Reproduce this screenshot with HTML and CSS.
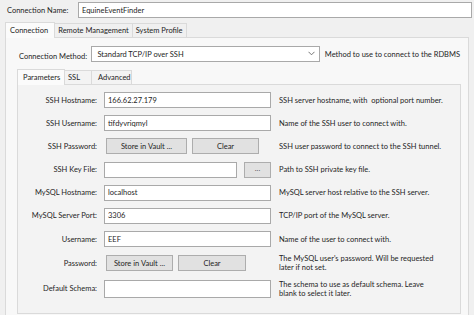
FILE: index.html
```html
<!DOCTYPE html>
<html>
<head>
<meta charset="utf-8">
<link rel="stylesheet" href="styles.css">
</head>
<body>
<div class="window">
  <div class="name-row">
    <span class="name-label">Connection Name:</span>
    <div class="field name-field">EquineEventFinder</div>
  </div>

  <div class="tabs">
    <div class="tab active">Connection</div>
    <div class="tab">Remote Management</div>
    <div class="tab">System Profile</div>
  </div>
  <div class="panel">
    <div class="method-row">
      <span class="method-label">Connection Method:</span>
      <div class="select">
        <span>Standard TCP/IP over SSH</span>
        <svg class="chev" width="7" height="5" viewBox="0 0 7 5"><path d="M0.5 0.8 L3.5 3.8 L6.5 0.8" fill="none" stroke="#666" stroke-width="0.9"/></svg>
      </div>
      <span class="desc">Method to use to connect to the RDBMS</span>
    </div>

    <div class="subtabs">
      <div class="subtab active">Parameters</div>
      <div class="subtab">SSL</div>
      <div class="subtab">Advanced</div>
    </div>
    <div class="subpanel">
      <div class="form">
        <span class="lbl">SSH Hostname:</span>
        <div class="field">166.62.27.179</div>
        <span class="desc">SSH server hostname, with &nbsp;optional port number.</span>

        <span class="lbl">SSH Username:</span>
        <div class="field">tifdyvriqmyl</div>
        <span class="desc">Name of the SSH user to connect with.</span>

        <span class="lbl">SSH Password:</span>
        <div class="btns wide">
          <div class="btn">Store in Vault ...</div>
          <div class="btn">Clear</div>
        </div>
        <span class="desc">SSH user password to connect to the SSH tunnel.</span>

        <span class="lbl">SSH Key File:</span>
        <div class="keyfile">
          <div class="field"></div>
          <div class="btn dots">...</div>
        </div>
        <span class="desc">Path to SSH private key file.</span>

        <span class="lbl">MySQL Hostname:</span>
        <div class="field">localhost</div>
        <span class="desc">MySQL server host relative to the SSH server.</span>

        <span class="lbl">MySQL Server Port:</span>
        <div class="field">3306</div>
        <span class="desc">TCP/IP port of the MySQL server.</span>

        <span class="lbl">Username:</span>
        <div class="field">EEF</div>
        <span class="desc">Name of the user to connect with.</span>

        <span class="lbl">Password:</span>
        <div class="btns narrow">
          <div class="btn">Store in Vault ...</div>
          <div class="btn">Clear</div>
        </div>
        <span class="desc two">The MySQL user's password. Will be requested<br>later if not set.</span>

        <span class="lbl">Default Schema:</span>
        <div class="field tall"></div>
        <span class="desc two">The schema to use as default schema. Leave<br>blank to select it later.</span>
      </div>
    </div>
  </div>
</div>
</body>
</html>
```

FILE: styles.css
```css
html, body {
  margin: 0;
  padding: 0;
  background: #f0f0f0;
}
body {
  font-family: "Lato", "Open Sans", sans-serif;
  font-size: 7.5px;
  color: #1e1e1e;
  width: 474px;
  height: 315px;
  overflow: hidden;
}
.window {
  padding: 2px 2px 0 5px;
}
.name-row {
  display: flex;
  align-items: center;
  height: 16px;
}
.name-label {
  width: 71px;
  padding-left: 2px;
  white-space: nowrap;
}
.field {
  box-sizing: border-box;
  height: 16px;
  background: #fff;
  border: 1px solid #a9a9a9;
  padding: 0 3px;
  display: flex;
  align-items: center;
  white-space: nowrap;
}
.name-field {
  flex: 1;
}
.tabs {
  display: flex;
  margin-top: 4px;
  height: 15px;
  align-items: flex-end;
}
.tab {
  height: 14px;
  box-sizing: border-box;
  padding: 0 3px 0 3px;
  display: flex;
  align-items: center;
  border: 1px solid #dadada;
  border-bottom: none;
  margin-left: -1px;
  background: #f0f0f0;
  white-space: nowrap;
}
.tab:first-child { margin-left: 0; }
.tab.active {
  height: 16px;
  background: #fbfbfb;
  padding: 0 6px 0 4px;
  position: relative;
  z-index: 1;
  margin-bottom: -1px;
}
.panel {
  box-sizing: border-box;
  height: 280px;
  margin-right: 3px;
  border: 1px solid #dadada;
  background: #f8f8f8;
  padding: 8px 8px 0 11px;
}
.method-row {
  display: flex;
  align-items: center;
  height: 16px;
}
.method-label {
  width: 73px;
  padding-left: 2px;
  padding-top: 4px;
  white-space: nowrap;
}
.select {
  box-sizing: border-box;
  width: 230px;
  height: 16px;
  background: #fff;
  border: 1px solid #a9a9a9;
  display: flex;
  align-items: center;
  justify-content: space-between;
  padding: 0 4px 0 5px;
  margin-right: 4px;
  white-space: nowrap;
}
.chev { margin-top: -1px; }
.subtabs {
  display: flex;
  margin-top: 7px;
  height: 15px;
  align-items: flex-end;
}
.subtab {
  height: 14px;
  box-sizing: border-box;
  padding: 0 5px 0 4px;
  display: flex;
  align-items: center;
  border: 1px solid #dadada;
  border-bottom: none;
  margin-left: -1px;
  background: #f3f3f3;
  white-space: nowrap;
}
.subtab:first-child { margin-left: 0; }
.subtab:nth-child(2) { width: 28px; padding-left: 3px; }
.subtab:nth-child(3) { width: 41px; padding-left: 6px; }
.subtab.active {
  height: 16px;
  background: #fbfbfb;
  width: 48px;
  padding-left: 5px;
  position: relative;
  z-index: 1;
  margin-bottom: -1px;
}
.subpanel {
  box-sizing: border-box;
  height: 230px;
  width: 444px;
  border: 1px solid #dadada;
  background: #f3f3f3;
  padding: 7px 0 0 0;
}
.form {
  display: grid;
  grid-template-columns: 79px 167px 1fr;
  column-gap: 7px;
  row-gap: 7.2px;
  align-items: center;
}
.lbl {
  text-align: right;
  white-space: nowrap;
}
.desc {
  white-space: nowrap;
  padding-left: 1px;
}
.desc.two {
  line-height: 9px;
}
.btns {
  display: flex;
  gap: 5px;
  padding-left: 2px;
}
.btn {
  box-sizing: border-box;
  height: 16px;
  background: #e1e1e1;
  border: 1px solid #adadad;
  display: flex;
  align-items: center;
  justify-content: center;
  white-space: nowrap;
}
.btns.wide .btn:first-child { width: 81px; }
.btns.wide .btn:last-child { width: 67px; }
.btns.narrow .btn:first-child { width: 67px; }
.btns.narrow .btn:last-child { width: 68px; }
.keyfile {
  display: flex;
  gap: 7px;
}
.keyfile .field { width: 133px; }
.btn.dots { width: 27px; color: #555; padding-bottom: 2px; }
.field.tall { height: 18px; }
```
